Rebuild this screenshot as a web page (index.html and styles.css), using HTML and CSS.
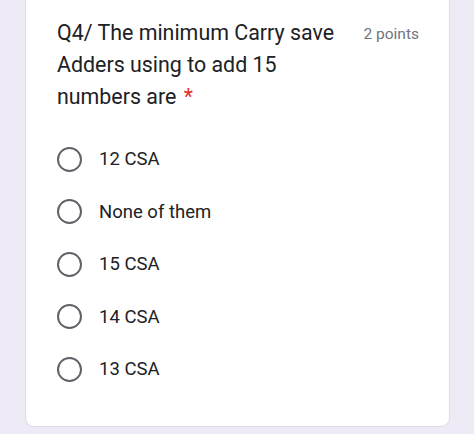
FILE: index.html
```html
<!DOCTYPE html>
<html>
<head>
<meta charset="utf-8">
<link rel="stylesheet" href="styles.css">
</head>
<body>
<div class="page">
  <div class="card">
    <div class="header">
      <div class="title">Q4/ The minimum Carry save Adders using to add 15 numbers are <span class="req">*</span></div>
      <div class="points">2 points</div>
    </div>
    <div class="options">
      <div class="option"><span class="radio"></span><span class="label">12 CSA</span></div>
      <div class="option"><span class="radio"></span><span class="label">None of them</span></div>
      <div class="option"><span class="radio"></span><span class="label">15 CSA</span></div>
      <div class="option"><span class="radio"></span><span class="label">14 CSA</span></div>
      <div class="option"><span class="radio"></span><span class="label">13 CSA</span></div>
    </div>
  </div>
</div>
</body>
</html>
```
FILE: styles.css
```css
html, body {
  margin: 0;
  padding: 0;
  background: #eeebf6;
}
.page {
  width: 474px;
  height: 434px;
  padding: 0 24px 0 25px;
  box-sizing: border-box;
  font-family: Roboto, "Noto Sans", sans-serif;
}
.card {
  background: #ffffff;
  border: 1px solid #dedbe6;
  border-top: none;
  border-radius: 0 0 9px 9px;
  height: 427px;
  box-sizing: border-box;
  padding: 17px 30px 0 31px;
}
.header {
  display: flex;
  justify-content: space-between;
  align-items: flex-start;
}
.title {
  width: 290px;
  font-size: 21.4px;
  line-height: 32px;
  color: #202124;
}
.req {
  color: #d93025;
  margin-left: 2px;
}
.points {
  font-size: 15.5px;
  line-height: 32px;
  color: #70757a;
  padding-top: 1px;
}
.options {
  display: flex;
  flex-direction: column;
  padding-top: 20px;
}
.option {
  display: flex;
  align-items: center;
  height: 52.5px;
}
.radio {
  width: 25px;
  height: 25px;
  box-sizing: border-box;
  border: 2.5px solid #5f6368;
  border-radius: 50%;
  flex: none;
}
.label {
  margin-left: 17px;
  font-size: 18.5px;
  color: #202124;
}
```
